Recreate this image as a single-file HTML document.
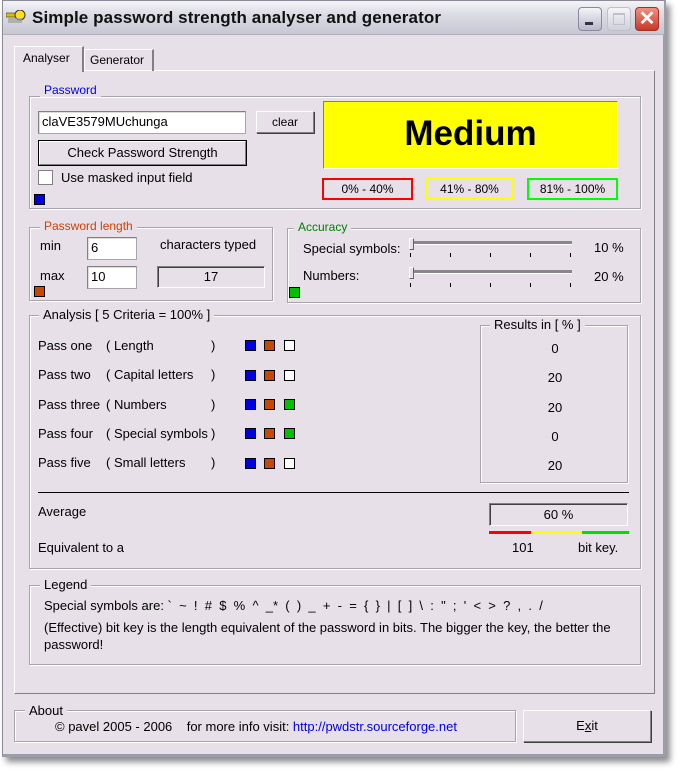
<!DOCTYPE html>
<html><head><meta charset="utf-8"><style>
*{margin:0;padding:0;box-sizing:border-box}
body{width:680px;height:772px;background:#fff;position:relative;overflow:hidden;font-family:"Liberation Sans",sans-serif;font-size:12px;color:#000}
.a{position:absolute}
.win{left:2px;top:0;width:664px;height:757px;background:#e8e0e8;border:1px solid #8c8c98;border-right:3px solid #9c9cac;border-bottom:3px solid #9c9cac;box-shadow:4px 5px 6px rgba(0,0,0,.45)}
.title{left:0;top:0;width:661px;height:34px;background:linear-gradient(#f4f4f8,#dcdce4 40%,#c8c8d4);border-bottom:1px solid #b0b0bc}
.grp{border:1px solid #a8a4ac;box-shadow:1px 1px 0 #fff inset,1px 1px 0 #fff}
.lg{background:#e8e0e8;padding:0 4px;line-height:14px}
.inp{background:#fff;border:1px solid #a8a4ac;border-top-color:#808080;border-left-color:#808080;box-shadow:inset 1px 1px 0 #e0dcd8;padding-left:3px;line-height:20px;font-size:13px}
.btn{background:#e8e0e8;border:1px solid #fff;border-right-color:#808080;border-bottom-color:#808080;box-shadow:1px 1px 0 #404040;text-align:center}
.sunk{border:1px solid #fff;border-top-color:#808080;border-left-color:#808080;box-shadow:inset 1px 1px 0 #404040;text-align:center}
.sq{width:11px;height:11px;border:1px solid #000}
.tk{width:1px;height:4px;background:#000}
</style></head><body>
<div class="a win">
<div class="a title"></div>
</div>
<svg class="a" style="left:6px;top:10px" width="22" height="14"><rect x="0" y="3" width="12" height="4" fill="#d8c000" stroke="#333" stroke-width=".6"/><circle cx="14" cy="5" r="5" fill="#ffe020" stroke="#333"/><rect x="2" y="8" width="14" height="5" fill="#a0a0a0" opacity=".7"/></svg>
<div class="a" style="left:32px;top:8px;font-size:17px;font-weight:bold;color:#111;letter-spacing:.1px">Simple password strength analyser and generator</div>
<div class="a" style="left:578px;top:7px;width:24px;height:24px;border-radius:4px;background:linear-gradient(#f4f4f8,#b8b8cc);border:1px solid #8888a0"><div class="a" style="left:6px;top:14px;width:8px;height:3px;background:#334"></div></div>
<div class="a" style="left:607px;top:7px;width:24px;height:24px;border-radius:4px;background:linear-gradient(#f4f4f8,#d0d0dc);border:1px solid #c0c0cc"><div class="a" style="left:5px;top:5px;width:12px;height:12px;border:1px solid #c0c0cc;border-top-width:2px"></div></div>
<div class="a" style="left:635px;top:7px;width:24px;height:24px;border-radius:4px;background:linear-gradient(#f09080,#c83828);border:1px solid #a03028;color:#fff;font-weight:bold;font-size:20px;line-height:22px;text-align:center">✕</div>

<div class="a" style="left:14px;top:70px;width:641px;height:624px;border:1px solid #fff;border-right-color:#808080;border-bottom-color:#808080"></div>
<div class="a" style="left:84px;top:49px;width:70px;height:22px;border:1px solid #fff;border-right:2px solid #808080;border-bottom:none;padding:3px 0 0 5px">Generator</div>
<div class="a" style="left:14px;top:46px;width:70px;height:26px;border:1px solid #fff;border-right:2px solid #808080;border-bottom:none;background:#e8e0e8;padding:4px 0 0 8px">Analyser</div>

<div class="a grp" style="left:29px;top:96px;width:612px;height:113px"></div>
<div class="a lg" style="left:40px;top:83px;color:#0000e0">Password</div>
<div class="a inp" style="left:38px;top:111px;width:208px;height:23px">claVE3579MUchunga</div>
<div class="a btn" style="left:256px;top:111px;width:58px;height:22px;line-height:20px">clear</div>
<div class="a" style="left:38px;top:140px;width:209px;height:26px;border:1px solid #000"><div class="btn" style="height:24px;line-height:22px;box-shadow:none;font-size:13px">Check Password Strength</div></div>
<div class="a" style="left:38px;top:170px;width:15px;height:15px;background:#fff;border:1px solid #808080"></div>
<div class="a" style="left:61px;top:170px;font-size:13px">Use masked input field</div>
<div class="a sq" style="left:34px;top:194px;background:#0000e0"></div>
<div class="a" style="left:323px;top:101px;width:295px;height:68px;background:#ffff00;border:1px solid #808080;border-right-color:#fff;border-bottom-color:#fff;text-align:center;font-weight:bold;font-size:35px;line-height:64px">Medium</div>
<div class="a" style="left:322px;top:178px;width:91px;height:22px;border:2px solid #ff0000;text-align:center;line-height:18px">0% - 40%</div>
<div class="a" style="left:425px;top:178px;width:89px;height:22px;border:2px solid #ffff00;text-align:center;line-height:18px">41% - 80%</div>
<div class="a" style="left:527px;top:178px;width:91px;height:22px;border:2px solid #00ff00;text-align:center;line-height:18px">81% - 100%</div>

<div class="a grp" style="left:29px;top:227px;width:244px;height:74px"></div>
<div class="a lg" style="left:40px;top:219px;color:#d04000">Password length</div>
<div class="a" style="left:40px;top:238px;font-size:13px">min</div>
<div class="a inp" style="left:87px;top:237px;width:50px;height:23px">6</div>
<div class="a" style="left:40px;top:268px;font-size:13px">max</div>
<div class="a inp" style="left:87px;top:266px;width:50px;height:23px">10</div>
<div class="a" style="left:160px;top:237px;font-size:13px">characters typed</div>
<div class="a sunk" style="left:157px;top:266px;width:108px;height:22px;line-height:20px;font-size:13px">17</div>
<div class="a sq" style="left:34px;top:286px;background:#c84800"></div>

<div class="a grp" style="left:287px;top:228px;width:354px;height:75px"></div>
<div class="a lg" style="left:294px;top:220px;color:#008000">Accuracy</div>
<div class="a" style="left:303px;top:241px;font-size:13px">Special symbols:</div>
<div class="a" style="left:303px;top:268px;font-size:13px">Numbers:</div>
<div class="a" style="left:412px;top:241px;width:160px;height:4px;background:#888;border-bottom:1px solid #fff"></div>
<div class="a" style="left:412px;top:270px;width:160px;height:4px;background:#888;border-bottom:1px solid #fff"></div>
<div class="a" style="left:409px;top:238px;width:5px;height:12px;background:#e8e0e8;border:1px solid #fff;border-right-color:#666;border-bottom-color:#666"></div>
<div class="a" style="left:409px;top:267px;width:5px;height:12px;background:#e8e0e8;border:1px solid #fff;border-right-color:#666;border-bottom-color:#666"></div>
<div class="a tk" style="left:410px;top:253px"></div><div class="a tk" style="left:450px;top:253px"></div><div class="a tk" style="left:490px;top:253px"></div><div class="a tk" style="left:530px;top:253px"></div><div class="a tk" style="left:570px;top:253px"></div>
<div class="a tk" style="left:410px;top:283px"></div><div class="a tk" style="left:450px;top:283px"></div><div class="a tk" style="left:490px;top:283px"></div><div class="a tk" style="left:530px;top:283px"></div><div class="a tk" style="left:570px;top:283px"></div>
<div class="a" style="left:594px;top:240px;font-size:13px">10 %</div>
<div class="a" style="left:594px;top:269px;font-size:13px">20 %</div>
<div class="a sq" style="left:289px;top:287px;background:#00c000"></div>

<div class="a grp" style="left:29px;top:315px;width:612px;height:254px"></div>
<div class="a lg" style="left:39px;top:308px;font-size:13px">Analysis [ 5 Criteria = 100% ]</div>
<div class="a grp" style="left:480px;top:325px;width:148px;height:158px"></div>
<div class="a lg" style="left:490px;top:318px;font-size:13px">Results in [ % ]</div>
<div class="a" style="left:38px;top:331px;font-size:13px;line-height:29.3px;white-space:pre">Pass one
Pass two
Pass three
Pass four
Pass five</div>
<div class="a" style="left:106px;top:331px;font-size:13px;line-height:29.3px;white-space:pre">( Length
( Capital letters
( Numbers
( Special symbols
( Small letters</div>
<div class="a" style="left:211px;top:331px;font-size:13px;line-height:29.3px;white-space:pre">)
)
)
)
)</div>
<div class="a" style="left:540px;top:334px;width:30px;text-align:center;font-size:13px;line-height:29.3px;white-space:pre">0
20
20
0
20</div>
<div class="a sq" style="left:245px;top:340px;background:#0000e0"></div><div class="a sq" style="left:264px;top:340px;background:#c84800"></div><div class="a sq" style="left:284px;top:340px;background:#fff"></div>
<div class="a sq" style="left:245px;top:370px;background:#0000e0"></div><div class="a sq" style="left:264px;top:370px;background:#c84800"></div><div class="a sq" style="left:284px;top:370px;background:#fff"></div>
<div class="a sq" style="left:245px;top:399px;background:#0000e0"></div><div class="a sq" style="left:264px;top:399px;background:#c84800"></div><div class="a sq" style="left:284px;top:399px;background:#00c000"></div>
<div class="a sq" style="left:245px;top:428px;background:#0000e0"></div><div class="a sq" style="left:264px;top:428px;background:#c84800"></div><div class="a sq" style="left:284px;top:428px;background:#00c000"></div>
<div class="a sq" style="left:245px;top:458px;background:#0000e0"></div><div class="a sq" style="left:264px;top:458px;background:#c84800"></div><div class="a sq" style="left:284px;top:458px;background:#fff"></div>
<div class="a" style="left:38px;top:492px;width:591px;height:1px;background:#000"></div>
<div class="a" style="left:38px;top:504px;font-size:13px">Average</div>
<div class="a sunk" style="left:489px;top:503px;width:139px;height:23px;line-height:21px;font-size:13px">60 %</div>
<div class="a" style="left:489px;top:531px;width:42px;height:3px;background:#ff0000"></div>
<div class="a" style="left:531px;top:531px;width:51px;height:3px;background:#ffff00"></div>
<div class="a" style="left:582px;top:531px;width:47px;height:3px;background:#00e000"></div>
<div class="a" style="left:38px;top:540px;font-size:13px">Equivalent to a</div>
<div class="a" style="left:512px;top:540px;font-size:13px">101</div>
<div class="a" style="left:578px;top:540px;font-size:13px">bit key.</div>

<div class="a grp" style="left:29px;top:585px;width:612px;height:80px"></div>
<div class="a lg" style="left:40px;top:578px;font-size:13px">Legend</div>
<div class="a" style="left:44px;top:598px;font-size:13px;white-space:pre">Special symbols are: `  ~  !  #  $  %  ^  _*  (  )  _  +  -  =  {  }  |  [  ]  \  :  "  ;  '  &lt;  &gt;  ?  ,  .  /</div>
<div class="a" style="left:44px;top:619px;width:590px;font-size:13px;line-height:17px">(Effective) bit key is the length equivalent of the password in bits. The bigger the key, the better the password!</div>

<div class="a grp" style="left:14px;top:710px;width:502px;height:32px"></div>
<div class="a lg" style="left:25px;top:704px;font-size:13px">About</div>
<div class="a" style="left:55px;top:719px;font-size:13px;white-space:pre">© pavel 2005 - 2006    for more info visit: <span style="color:#0000e0">http://pwdstr.sourceforge.net</span></div>
<div class="a btn" style="left:523px;top:710px;width:128px;height:32px;line-height:30px;font-size:13px">E<u>x</u>it</div>
</body></html>
